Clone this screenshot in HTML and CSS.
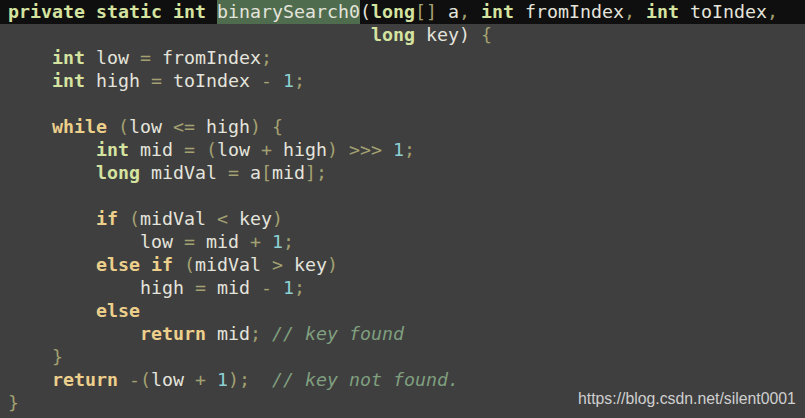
FILE: index.html
```html
<!DOCTYPE html>
<html>
<head>
<meta charset="utf-8">
<link rel="stylesheet" href="styles.css">
</head>
<body>
<div class="editor">
<div class="line cur"><span class="t">private</span> <span class="t">static</span> <span class="t">int</span> <span class="hl">binarySearch0</span>(<span class="t">long</span><span class="o">[]</span> a<span class="o">,</span> <span class="t">int</span> fromIndex<span class="o">,</span> <span class="t">int</span> toIndex<span class="o">,</span></div>
<div class="line">                                 <span class="t">long</span> key) <span class="o">{</span></div>
<div class="line">    <span class="t">int</span> low <span class="o">=</span> fromIndex<span class="o">;</span></div>
<div class="line">    <span class="t">int</span> high <span class="o">=</span> toIndex <span class="o">-</span> <span class="n">1</span><span class="o">;</span></div>
<div class="line"> </div>
<div class="line">    <span class="k">while</span> <span class="o">(</span>low <span class="o">&lt;=</span> high<span class="o">)</span> <span class="o">{</span></div>
<div class="line">        <span class="t">int</span> mid <span class="o">=</span> <span class="o">(</span>low <span class="o">+</span> high<span class="o">)</span> <span class="o">&gt;&gt;&gt;</span> <span class="n">1</span><span class="o">;</span></div>
<div class="line">        <span class="t">long</span> midVal <span class="o">=</span> a<span class="o">[</span>mid<span class="o">];</span></div>
<div class="line"> </div>
<div class="line">        <span class="k">if</span> <span class="o">(</span>midVal <span class="o">&lt;</span> key<span class="o">)</span></div>
<div class="line">            low <span class="o">=</span> mid <span class="o">+</span> <span class="n">1</span><span class="o">;</span></div>
<div class="line">        <span class="k">else</span> <span class="k">if</span> <span class="o">(</span>midVal <span class="o">&gt;</span> key<span class="o">)</span></div>
<div class="line">            high <span class="o">=</span> mid <span class="o">-</span> <span class="n">1</span><span class="o">;</span></div>
<div class="line">        <span class="k">else</span></div>
<div class="line">            <span class="k">return</span> mid<span class="o">;</span> <span class="c">// key found</span></div>
<div class="line">    <span class="o">}</span></div>
<div class="line">    <span class="k">return</span> <span class="o">-(</span>low <span class="o">+</span> <span class="n">1</span><span class="o">);</span>  <span class="c">// key not found.</span></div>
<div class="line"><span class="o">}</span></div>
</div>
<div class="watermark">https://blog.csdn.net/silent0001</div>
</body>
</html>
```
FILE: styles.css
```css
html, body {
  margin: 0;
  padding: 0;
  background: #3f3f3f;
  width: 805px;
  height: 418px;
  overflow: hidden;
}
body {
  position: relative;
}
.editor {
  font-family: "DejaVu Sans Mono", "Liberation Mono", monospace;
  font-size: 18.27px;
  color: #e4e4dc;
}
.line {
  height: 23px;
  line-height: 24px;
  white-space: pre;
  padding-left: 8px;
}
.line.cur {
  background: #0f0f0f;
  height: 24px;
  margin-bottom: -1px;
}
.hl {
  background: #4f6c4e;
  display: inline-block;
  height: 24px;
}
.t {
  color: #d5e3a0;
  font-weight: bold;
}
.k {
  color: #edcf8c;
  font-weight: bold;
}
.o {
  color: #a3a171;
}
.n {
  color: #8cd0d3;
}
.c {
  color: #7f9f7f;
  font-style: italic;
}
.watermark {
  position: absolute;
  left: 578px;
  top: 390px;
  font-family: "Liberation Sans", Arial, sans-serif;
  font-size: 15.8px;
  color: #cfcfcf;
  white-space: nowrap;
}
```
